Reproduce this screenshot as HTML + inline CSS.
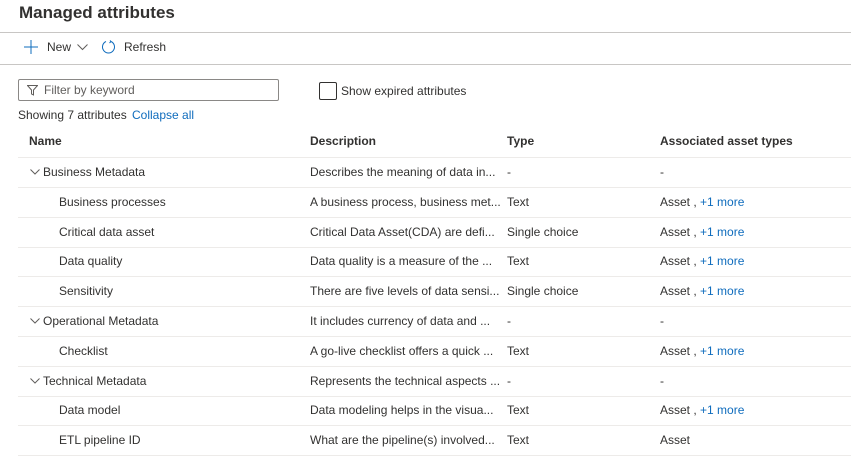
<!DOCTYPE html>
<html><head><style>
*{margin:0;padding:0;box-sizing:border-box}
body{width:851px;height:470px;overflow:hidden;background:#fff;font-family:"Liberation Sans",sans-serif;color:#323130;font-size:12px;position:relative}
.a{position:absolute;white-space:nowrap}
.line{position:absolute;height:1px;background:#c8c6c4}
.rl{position:absolute;left:18px;right:0;height:1px;background:#edebe9}
.blue{color:#0f6cbd}
.grey{color:#605e5c}
</style></head><body>
<div class="a" style="left:19px;top:3px;font-size:17px;font-weight:bold;color:#323130">Managed attributes</div>
<div class="line" style="left:0;right:0;top:32px"></div>
<svg class="a" style="left:24px;top:40px" width="14" height="14"><path d="M7 0V14M0 7H14" stroke="#0f6cbd" stroke-width="1"/></svg>
<div class="a" style="left:47px;top:40px">New</div>
<svg class="a" style="left:77px;top:44px" width="11" height="7"><path d="M0.5 0.5L5.5 5.5L10.5 0.5" stroke="#605e5c" fill="none"/></svg>
<svg class="a" style="left:101px;top:40px" width="15" height="15"><path d="M5 1.5A6 6 0 1 0 10 1.5M9 0.5L10 1.5L8.5 3" stroke="#0f6cbd" fill="none"/></svg>
<div class="a" style="left:124px;top:40px">Refresh</div>
<div class="line" style="left:0;right:0;top:64px"></div>
<div class="a" style="left:18px;top:79px;width:261px;height:22px;border:1px solid #8a8886;border-radius:2px"></div>
<svg class="a" style="left:27px;top:85px" width="11" height="11"><path d="M0.5 0.5H10.5L6.5 5V10L4.5 9V5Z" stroke="#605e5c" fill="none"/></svg>
<div class="a grey" style="left:44px;top:83px">Filter by keyword</div>
<div class="a" style="left:319px;top:82px;width:18px;height:18px;border:1px solid #323130;border-radius:2px"></div>
<div class="a" style="left:341px;top:84px">Show expired attributes</div>
<div class="a" style="left:18px;top:108px">Showing 7 attributes</div>
<div class="a blue" style="left:132px;top:108px">Collapse all</div>
<div class="a" style="left:29px;top:134px;font-weight:bold">Name</div>
<div class="a" style="left:310px;top:134px;font-weight:bold">Description</div>
<div class="a" style="left:507px;top:134px;font-weight:bold">Type</div>
<div class="a" style="left:660px;top:134px;font-weight:bold">Associated asset types</div>
<div class="rl" style="top:157px"></div>

<div id="rows"></div>
<script>
var rows=[
[1,"Business Metadata","Describes the meaning of data in...","-","-"],
[0,"Business processes","A business process, business met...","Text",1],
[0,"Critical data asset","Critical Data Asset(CDA) are defi...","Single choice",1],
[0,"Data quality","Data quality is a measure of the ...","Text",1],
[0,"Sensitivity","There are five levels of data sensi...","Single choice",1],
[1,"Operational Metadata","It includes currency of data and ...","-","-"],
[0,"Checklist","A go-live checklist offers a quick ...","Text",1],
[1,"Technical Metadata","Represents the technical aspects ...","-","-"],
[0,"Data model","Data modeling helps in the visua...","Text",1],
[0,"ETL pipeline ID","What are the pipeline(s) involved...","Text","Asset"]];
var h="";
for(var i=0;i<rows.length;i++){var r=rows[i];var y=165+i*29.8;
if(r[0])h+='<svg class="a" style="left:30px;top:'+(y+4)+'px" width="10" height="6"><path d="M0.5 0.5L5 5L9.5 0.5" stroke="#605e5c" fill="none"/></svg><div class="a" style="left:43px;top:'+y+'px">'+r[1]+'</div>';
else h+='<div class="a" style="left:59px;top:'+y+'px">'+r[1]+'</div>';
h+='<div class="a" style="left:310px;top:'+y+'px">'+r[2]+'</div><div class="a" style="left:507px;top:'+y+'px">'+r[3]+'</div>';
var a=r[4]===1?'Asset , <span class="blue">+1 more</span>':r[4];
h+='<div class="a" style="left:660px;top:'+y+'px">'+a+'</div><div class="rl" style="top:'+(y+22)+'px"></div>';}
document.getElementById("rows").innerHTML=h;
</script>
</body></html>
